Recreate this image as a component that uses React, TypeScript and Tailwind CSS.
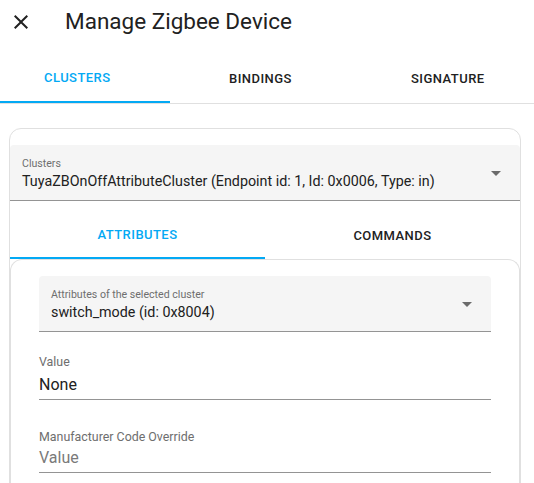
import React from "react";

function MenuDown() {
  return (
    <svg viewBox="0 0 24 24" className="h-6 w-6 shrink-0 fill-[#6b6b6b]">
      <path d="M7,10L12,15L17,10H7Z" />
    </svg>
  );
}

function SelectField({ label, value }: { label: string; value: string }) {
  return (
    <div className="flex h-[56px] items-center rounded-t-[4px] border-b border-[#949494] bg-[#f5f5f5] pr-[12px]">
      <div className="flex flex-1 flex-col self-start pl-[12px] pt-[12px]">
        <span className="text-[10.6px] leading-[14px] text-[#6e6e6e]">{label}</span>
        <span className="text-[14.3px] leading-[20px] text-[#212121]">{value}</span>
      </div>
      <MenuDown />
    </div>
  );
}

function TextField({ label, value, placeholder }: { label: string; value?: string; placeholder?: string }) {
  return (
    <div className="flex flex-col border-b border-[#949494] pb-[4px]">
      <span className="text-[12.4px] leading-[14px] text-[#6e6e6e]">{label}</span>
      {value ? (
        <span className="mt-[6px] text-[16px] leading-[20px] text-[#212121]">{value}</span>
      ) : (
        <span className="mt-[4px] text-[16px] leading-[20px] text-[#7a7a7a]">{placeholder}</span>
      )}
    </div>
  );
}

export default function App() {
  return (
    <div
      className="h-[483px] w-[534px] overflow-hidden bg-white"
      style={{ fontFamily: "Roboto, 'Liberation Sans', sans-serif" }}
    >
      {/* header */}
      <header className="flex h-[44px] items-center pl-[9px]">
        <svg viewBox="0 0 24 24" className="h-6 w-6 fill-[#212121]">
          <path d="M19,6.41L17.59,5L12,10.59L6.41,5L5,6.41L10.59,12L5,17.59L6.41,19L12,13.41L17.59,19L19,17.59L13.41,12L19,6.41Z" />
        </svg>
        <h2 className="ml-[32px] text-[22.5px] font-normal text-[#212121]">Manage Zigbee Device</h2>
      </header>

      {/* main tabs */}
      <nav className="mt-[11px] flex h-[49px] border-b border-[#e0e0e0] text-[13px] font-medium uppercase tracking-[0.45px]">
        <div className="flex w-[170px] flex-col">
          <span className="flex flex-1 items-center pl-[44px] text-[#03a9f4]">Clusters</span>
          <div className="h-[2px] bg-[#03a9f4]" />
        </div>
        <div className="flex w-[190px] items-center pl-[59px] text-[#212121]">Bindings</div>
        <div className="flex flex-1 items-center pl-[51px] text-[#212121]">Signature</div>
      </nav>

      {/* outer card */}
      <section className="ml-[9px] mt-[24px] w-[512px] rounded-[12px] border border-[#e0e0e0] pt-[16px]">
        <SelectField
          label="Clusters"
          value="TuyaZBOnOffAttributeCluster (Endpoint id: 1, Id: 0x0006, Type: in)"
        />

        <div className="mt-[10px] flex h-[48px] text-[13px] font-medium uppercase tracking-[0.45px]">
          <div className="flex flex-1 flex-col">
            <span className="flex flex-1 items-center justify-center pt-[2px] text-[#03a9f4]">Attributes</span>
            <div className="h-[2px] bg-[#03a9f4]" />
          </div>
          <div className="flex flex-1 items-center justify-center pt-[2px] text-[#212121]">Commands</div>
        </div>

        {/* inner card */}
        <div className="h-[260px] rounded-t-[12px] border border-b-0 border-[#e0e0e0] px-[28px] pt-[16px]">
          <SelectField label="Attributes of the selected cluster" value="switch_mode (id: 0x8004)" />
          <div className="mt-[23px]">
            <TextField label="Value" value="None" />
          </div>
          <div className="mt-[30px]">
            <TextField label="Manufacturer Code Override" placeholder="Value" />
          </div>
        </div>
      </section>
    </div>
  );
}
